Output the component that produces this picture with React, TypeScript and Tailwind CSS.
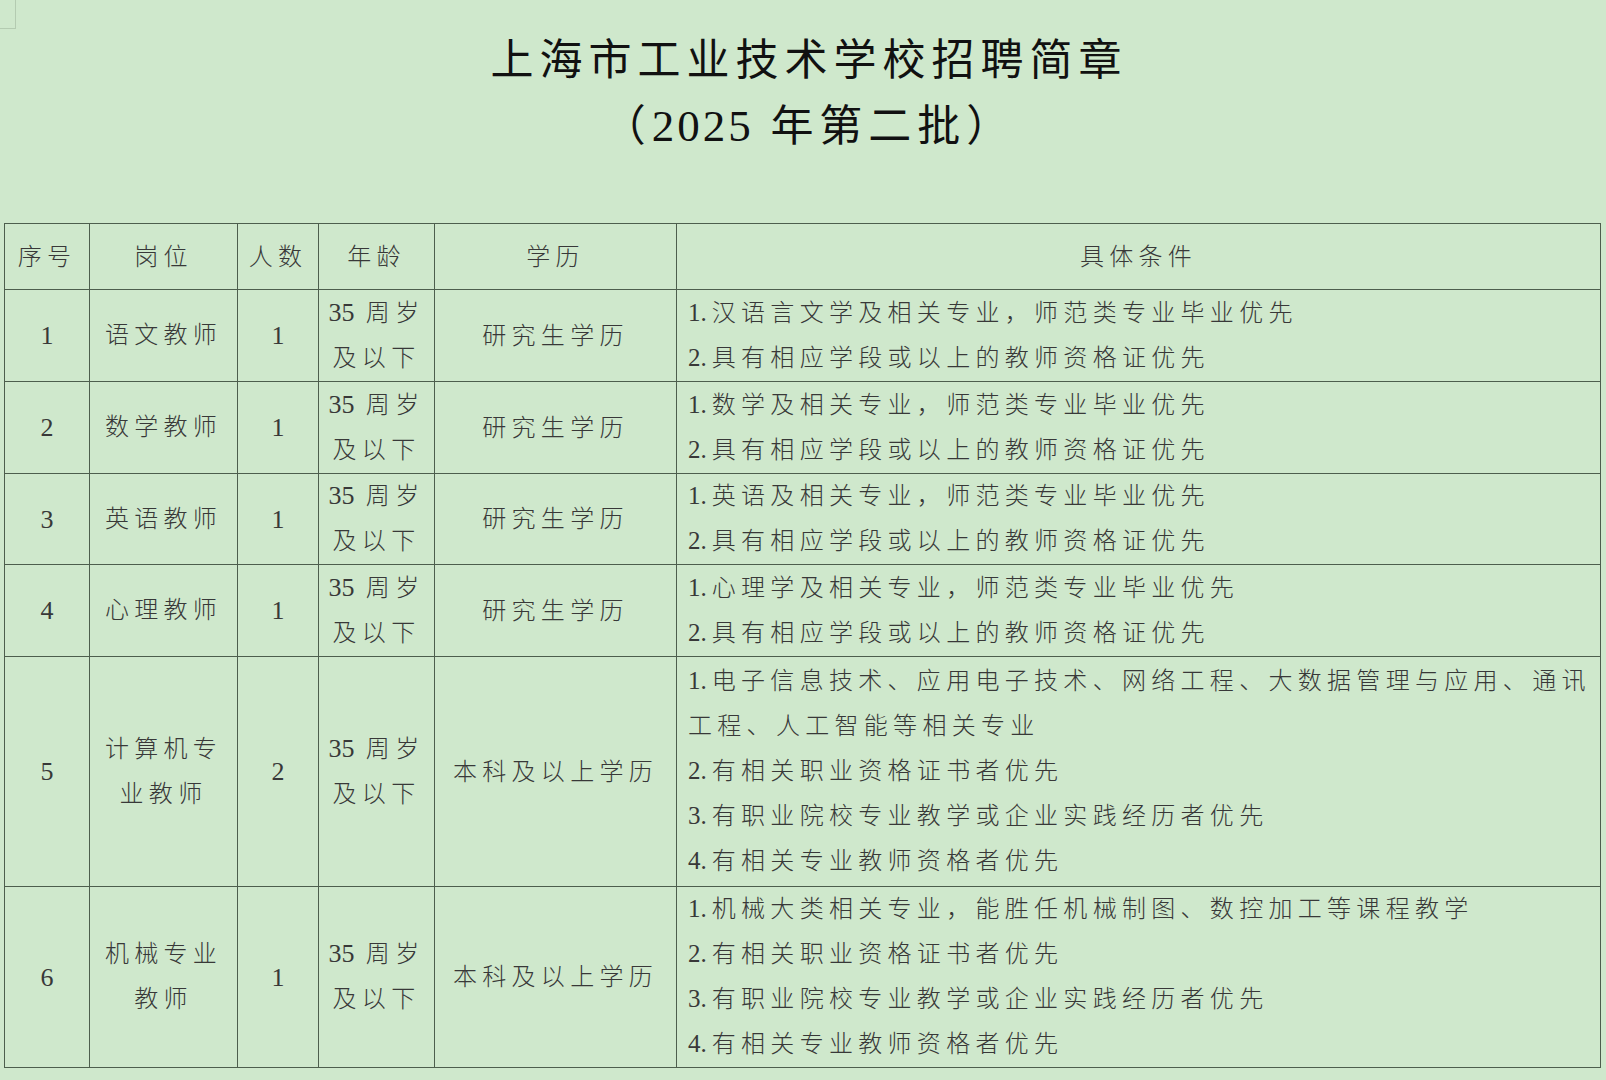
const FONT = '"Liberation Serif", "Noto Sans CJK SC", serif'

type Row = {
  no: string
  post: string[]
  count: string
  edu: string
  reqs: string[]
  h: string
}

const rows: Row[] = [
  {
    no: '1',
    post: ['语文教师'],
    count: '1',
    edu: '研究生学历',
    reqs: ['1.汉语言文学及相关专业，师范类专业毕业优先', '2.具有相应学段或以上的教师资格证优先'],
    h: 'h-[92px]',
  },
  {
    no: '2',
    post: ['数学教师'],
    count: '1',
    edu: '研究生学历',
    reqs: ['1.数学及相关专业，师范类专业毕业优先', '2.具有相应学段或以上的教师资格证优先'],
    h: 'h-[92px]',
  },
  {
    no: '3',
    post: ['英语教师'],
    count: '1',
    edu: '研究生学历',
    reqs: ['1.英语及相关专业，师范类专业毕业优先', '2.具有相应学段或以上的教师资格证优先'],
    h: 'h-[91px]',
  },
  {
    no: '4',
    post: ['心理教师'],
    count: '1',
    edu: '研究生学历',
    reqs: ['1.心理学及相关专业，师范类专业毕业优先', '2.具有相应学段或以上的教师资格证优先'],
    h: 'h-[92px]',
  },
  {
    no: '5',
    post: ['计算机专', '业教师'],
    count: '2',
    edu: '本科及以上学历',
    reqs: [
      '1.电子信息技术、应用电子技术、网络工程、大数据管理与应用、通讯',
      '工程、人工智能等相关专业',
      '2.有相关职业资格证书者优先',
      '3.有职业院校专业教学或企业实践经历者优先',
      '4.有相关专业教师资格者优先',
    ],
    h: 'h-[230px]',
  },
  {
    no: '6',
    post: ['机械专业', '教师'],
    count: '1',
    edu: '本科及以上学历',
    reqs: [
      '1.机械大类相关专业，能胜任机械制图、数控加工等课程教学',
      '2.有相关职业资格证书者优先',
      '3.有职业院校专业教学或企业实践经历者优先',
      '4.有相关专业教师资格者优先',
    ],
    h: 'h-[181px]',
  },
]

const cell = 'border border-[#4d5e4d] text-center align-middle p-0'

// "1.xxx" -> number part without tracking, rest with tracking
const Req = ({ text }: { text: string }) => {
  const m = text.match(/^(\d\.)(.*)$/)
  if (!m) return <div className="h-[45px]">{text}</div>
  return (
    <div className="h-[45px]">
      <span className="tracking-normal text-[25px] leading-none mr-[5px]">{m[1]}</span>
      {m[2]}
    </div>
  )
}

const App = () => {
  return (
    <div
      className="relative w-[1606px] h-[1080px] overflow-hidden bg-[#cfe8cc] text-[#383838]"
      style={{ fontFamily: FONT }}
    >
      {/* faint page corner mark */}
      <div className="absolute left-0 top-0 w-[16px] h-[29px] border-r border-b border-[#b4cbb1]" />

      {/* Title */}
      <div className="pt-[28px] pl-[12px] text-center text-[#111] text-[43px] leading-[66px] tracking-[6px]">
        <div className="h-[66px]">上海市工业技术学校招聘简章</div>
        <div className="h-[66px]">
          （<span className="tracking-[3px] text-[45px] leading-none">2025</span> 年第二批）
        </div>
      </div>

      {/* Table */}
      <table className="mt-[63px] ml-[4px] w-[1597px] table-fixed border-collapse text-[24px] tracking-[5.3px] font-light">
        <colgroup>
          <col className="w-[85px]" />
          <col className="w-[148px]" />
          <col className="w-[81px]" />
          <col className="w-[116px]" />
          <col className="w-[242px]" />
          <col />
        </colgroup>
        <thead>
          <tr className="h-[66px]">
            <th className={`${cell} font-light`}>序号</th>
            <th className={`${cell} font-light`}>岗位</th>
            <th className={`${cell} font-light`}>人数</th>
            <th className={`${cell} font-light`}>年龄</th>
            <th className={`${cell} font-light`}>学历</th>
            <th className={`${cell} font-light`}>具体条件</th>
          </tr>
        </thead>
        <tbody>
          {rows.map((r) => (
            <tr key={r.no} className={r.h}>
              <td className={`${cell} tracking-normal text-[26px]`}>{r.no}</td>
              <td className={`${cell} leading-[45px]`}>
                {r.post.map((p) => (
                  <div key={p}>{p}</div>
                ))}
              </td>
              <td className={`${cell} tracking-normal text-[26px]`}>{r.count}</td>
              <td className={`${cell} leading-[45px]`}>
                <div className="h-[45px]">
                  <span className="tracking-normal text-[26px] leading-none">35</span> 周岁
                </div>
                <div>及以下</div>
              </td>
              <td className={cell}>{r.edu}</td>
              <td className={`${cell} text-left pl-[11px] leading-[45px] whitespace-nowrap`}>
                {r.reqs.map((q) => (
                  <Req key={q} text={q} />
                ))}
              </td>
            </tr>
          ))}
        </tbody>
      </table>
    </div>
  )
}

export default App
